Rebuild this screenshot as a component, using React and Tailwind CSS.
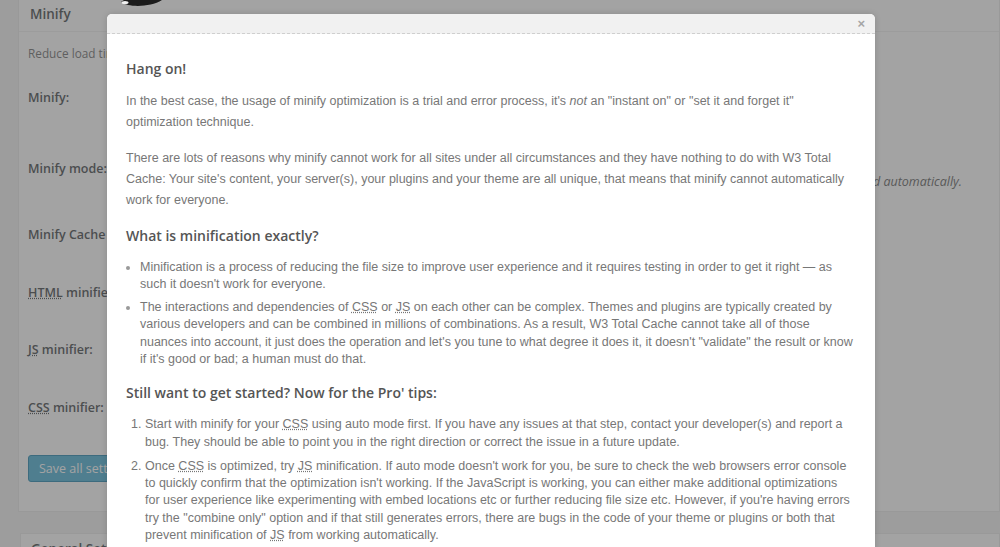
import React from "react";

function Abbr({ children, title }) {
  return <abbr title={title}>{children}</abbr>;
}

function Row({ h, label, children }) {
  return (
    <div className={`flex ${h}`}>
      <div className="w-[200px] shrink-0 font-semibold text-[#23282d] text-[12.5px] leading-[20px]">{label}</div>
      <div className="flex-1 min-w-0">{children}</div>
    </div>
  );
}

export default function App() {
  return (
    <div className="relative w-[1000px] h-[547px] overflow-hidden bg-[#f1f1f1] font-['Open_Sans',sans-serif]">
      {/* underlying settings page */}
      <div className="flex flex-col pl-[18px]">
        <div className="mt-[-4px] bg-white border border-[#e5e5e5]">
          <div className="h-[35px] flex items-center px-[11px] border-b border-[#eee] font-semibold text-[13.5px] text-[#23282d]">
            Minify
          </div>
          <div className="px-[9px] pt-[11px] pb-[29px]">
            <p className="text-[11.8px] leading-[20px] text-[#555] mb-[25px]">
              Reduce load time by decreasing the size and number of CSS and JS files.
            </p>
            <Row h="h-[71px]" label="Minify:" />
            <Row h="h-[66px]" label="Minify mode:">
              <p className="mt-[13px] pr-[28px] text-right italic text-[12.5px] leading-[20px] text-[#444] whitespace-nowrap">
                Select manual mode to use fields below to specify the files, otherwise files will be detected automatically.
              </p>
            </Row>
            <Row h="h-[58px]" label="Minify Cache Method:" />
            <Row h="h-[57px]" label={<span><Abbr title="Hypertext Markup Language">HTML</Abbr> minifier:</span>} />
            <Row h="h-[58px]" label={<span><Abbr title="JavaScript">JS</Abbr> minifier:</span>} />
            <Row h="h-[57px]" label={<span><Abbr title="Cascading Style Sheets">CSS</Abbr> minifier:</span>} />
            <button className="h-[27px] px-[10px] rounded-[3px] bg-[#2ea2cc] border border-[#0074a2] text-white text-[12.5px] leading-[25px]">
              Save all settings
            </button>
          </div>
        </div>
        <div className="mt-[21px] ml-[2px] bg-white border border-[#e5e5e5] h-[60px]">
          <div className="h-[30px] flex items-center px-[10px] font-semibold text-[13.5px] text-[#23282d]">
            General Settings
          </div>
        </div>
      </div>

      {/* overlay */}
      <div className="absolute inset-0 bg-[#666]/60" />

      {/* partial logo at top */}
      <svg className="absolute left-[118px] top-0" width="46" height="7" viewBox="0 0 46 7">
        <path d="M3 2 C10 7.5, 32 7.5, 44 0 L6 0 Z" fill="#1c1c1c" />
        <ellipse cx="7" cy="2.5" rx="3.5" ry="1.6" fill="#f2f2f2" />
      </svg>

      {/* modal */}
      <div className="absolute left-[107px] top-[14px] w-[768px] h-[560px] bg-white rounded-t-[5px] shadow-[0_0_6px_rgba(0,0,0,0.15)]">
        <div className="relative h-[20px] bg-[#f1f1f1] rounded-t-[5px] border-b border-dashed border-[#cfcfcf]">
          <span className="absolute right-[10px] top-[2px] text-[13px] leading-[16px] font-bold text-[#a6a6a6] font-['Liberation_Sans',sans-serif]">×</span>
        </div>
        <div className="pl-[19px] pr-[20px] pt-[25px] text-[#777] font-['Liberation_Sans',Arial,sans-serif] text-[12.5px]">
          <h2 className="font-['Open_Sans',sans-serif] font-semibold text-[14px] leading-[20px] text-[#555] mb-[11.5px]">Hang on!</h2>
          <p className="leading-[21px] mb-[15px]">
            In the best case, the usage of minify optimization is a trial and error process, it's <em>not</em> an "instant on" or "set it and forget it" optimization technique.
          </p>
          <p className="leading-[21px] mb-[15.5px]">
            There are lots of reasons why minify cannot work for all sites under all circumstances and they have nothing to do with W3 Total Cache: Your site's content, your server(s), your plugins and your theme are all unique, that means that minify cannot automatically work for everyone.
          </p>
          <h2 className="font-['Open_Sans',sans-serif] font-semibold text-[14px] leading-[20px] text-[#555] mb-[12.5px]">What is minification exactly?</h2>
          <ul className="list-disc pl-[14px] leading-[17.3px] mb-[14.5px] flex flex-col gap-[6px] marker:text-[#999]">
            <li>Minification is a process of reducing the file size to improve user experience and it requires testing in order to get it right — as such it doesn't work for everyone.</li>
            <li>
              The interactions and dependencies of <Abbr title="Cascading Style Sheets">CSS</Abbr> or <Abbr title="JavaScript">JS</Abbr> on each other can be complex. Themes and plugins are typically created by various developers and can be combined in millions of combinations. As a result, W3 Total Cache cannot take all of those nuances into account, it just does the operation and let's you tune to what degree it does it, it doesn't "validate" the result or know if it's good or bad; a human must do that.
            </li>
          </ul>
          <h2 className="font-['Open_Sans',sans-serif] font-semibold text-[14px] leading-[20px] text-[#555] mb-[13.5px]">Still want to get started? Now for the Pro' tips:</h2>
          <ol className="list-decimal pl-[19px] leading-[17.3px] flex flex-col gap-[7px]">
            <li>
              Start with minify for your <Abbr title="Cascading Style Sheets">CSS</Abbr> using auto mode first. If you have any issues at that step, contact your developer(s) and report a bug. They should be able to point you in the right direction or correct the issue in a future update.
            </li>
            <li>
              Once <Abbr title="Cascading Style Sheets">CSS</Abbr> is optimized, try <Abbr title="JavaScript">JS</Abbr> minification. If auto mode doesn't work for you, be sure to check the web browsers error console to quickly confirm that the optimization isn't working. If the JavaScript is working, you can either make additional optimizations for user experience like experimenting with embed locations etc or further reducing file size etc. However, if you're having errors try the "combine only" option and if that still generates errors, there are bugs in the code of your theme or plugins or both that prevent minification of <Abbr title="JavaScript">JS</Abbr> from working automatically.
            </li>
          </ol>
        </div>
      </div>
    </div>
  );
}
